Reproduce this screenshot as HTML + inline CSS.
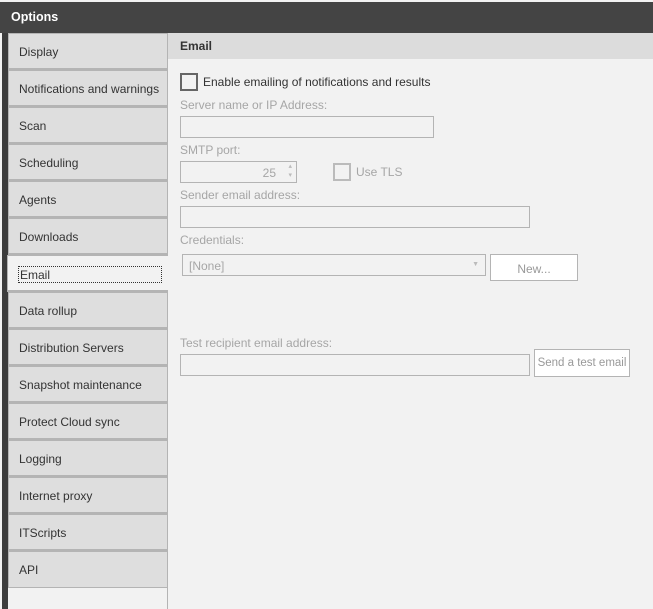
<!DOCTYPE html>
<html><head><style>
body{margin:0;width:653px;height:609px;overflow:hidden;background:#f2f2f2;font-family:"Segoe UI","Liberation Sans",sans-serif;font-size:12px;position:relative}
div,span{position:absolute;box-sizing:border-box}
.t{background:#444;left:0;top:2px;width:653px;height:31px;color:#fff;font-weight:bold;font-size:12.5px;padding:8px 0 0 11px}
.lb{left:2px;top:33px;width:6px;height:576px;background:#3c3c3c}
.side{left:8px;top:33px;width:160px;height:576px;background:#f2f2f2;border-right:1px solid #b4b4b4}
.it{left:8px;width:160px;height:37px;background:#dedede;border:1px solid #b4b4b4;border-bottom:2px solid #b4b4b4;color:#333;padding:11px 0 0 10px;font-size:12px}
.sel{background:#f2f2f2;border-color:#b4b4b4;left:7px}
.hd{left:168px;top:33px;width:485px;height:26px;background:#dcdcdc;font-weight:bold;color:#333;padding:6px 0 0 12px}
.lab{color:#a6a6a6;font-size:12px}
.box{border:1px solid #b4b4b4;background:#f2f2f2}
.btn{border:1px solid #b4b4b4;background:#fff;color:#999;text-align:center}
</style></head><body>
<div class="t">Options</div>
<div class="lb"></div>
<div class="side"></div>
<div class="it" style="top:33px">Display</div>
<div class="it" style="top:70px">Notifications and warnings</div>
<div class="it" style="top:107px">Scan</div>
<div class="it" style="top:144px">Scheduling</div>
<div class="it" style="top:181px">Agents</div>
<div class="it" style="top:218px">Downloads</div>
<div class="it sel" style="top:255px;border-right:none;width:161px;padding:0"><span style="left:10px;top:10px;width:144px;height:17px;border:1px dotted #333;padding:0 0 0 1px;line-height:16px">Email</span></div>
<div class="it" style="top:292px">Data rollup</div>
<div class="it" style="top:329px">Distribution Servers</div>
<div class="it" style="top:366px">Snapshot maintenance</div>
<div class="it" style="top:403px">Protect Cloud sync</div>
<div class="it" style="top:440px">Logging</div>
<div class="it" style="top:477px">Internet proxy</div>
<div class="it" style="top:514px">ITScripts</div>
<div class="it" style="top:551px;border-bottom-width:1px;height:37px">API</div>
<div class="hd">Email</div>
<div style="left:180px;top:73px;width:18px;height:18px;border:2px solid #666"></div>
<div style="left:203px;top:75px;color:#333">Enable emailing of notifications and results</div>
<div class="lab" style="left:180px;top:98px">Server name or IP Address:</div>
<div class="box" style="left:180px;top:116px;width:254px;height:22px"></div>
<div class="lab" style="left:180px;top:143px">SMTP port:</div>
<div class="box" style="left:180px;top:161px;width:117px;height:22px"><span class="lab" style="right:20px;top:4px">25</span><span style="right:4px;top:0;color:#bbb;font-size:7px;line-height:9px">▴<br>▾</span></div>
<div style="left:333px;top:163px;width:18px;height:18px;border:2px solid #bbb"></div>
<div class="lab" style="left:356px;top:165px">Use TLS</div>
<div class="lab" style="left:180px;top:188px">Sender email address:</div>
<div class="box" style="left:180px;top:206px;width:350px;height:22px"></div>
<div class="lab" style="left:180px;top:233px">Credentials:</div>
<div class="box" style="left:182px;top:254px;width:304px;height:22px"><span class="lab" style="left:6px;top:4px">[None]</span><span style="right:6px;top:6px;color:#bbb;font-size:7px">▼</span></div>
<div class="btn" style="left:490px;top:254px;width:88px;height:27px;padding-top:7px">New...</div>
<div class="lab" style="left:180px;top:336px">Test recipient email address:</div>
<div class="box" style="left:180px;top:354px;width:350px;height:22px"></div>
<div class="btn" style="left:534px;top:349px;width:96px;height:28px;padding-top:7px;font-size:11.5px;white-space:nowrap">Send a test email</div>
</body></html>
